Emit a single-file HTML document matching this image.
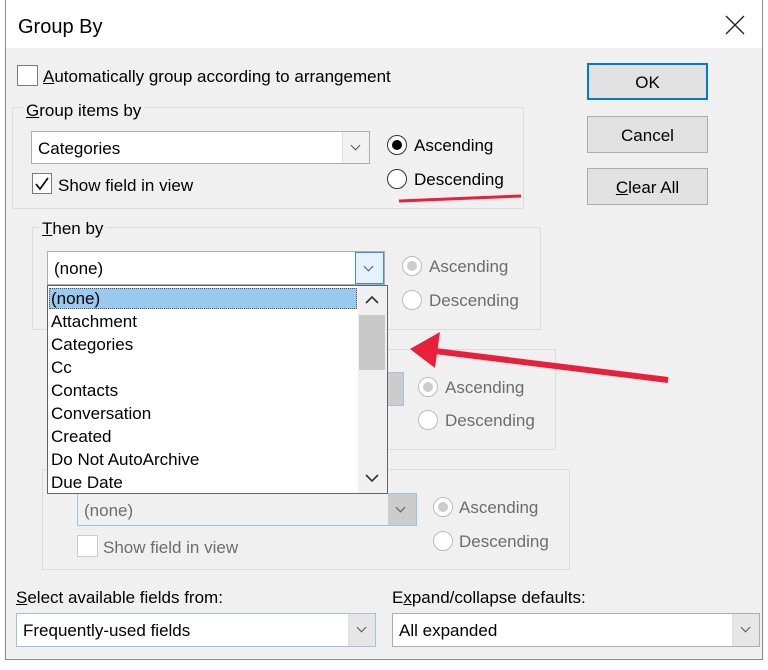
<!DOCTYPE html>
<html><head><meta charset="utf-8"><style>
*{box-sizing:border-box;margin:0;padding:0}
body{width:768px;height:670px;background:#fff;font-family:"Liberation Sans",sans-serif;font-size:17px;color:#000;position:relative;overflow:hidden}
.a{position:absolute}
.dlg{left:5px;top:0;width:758px;height:660px;background:#f0f0f0;border:1px solid #888}
.tb{left:6px;top:0;width:756px;height:48px;background:#fff}
.fr{position:absolute;border:1px solid #dcdcdc}
.lbl{position:absolute;background:#f0f0f0;padding:0 3px;line-height:20px}
.cb{position:absolute;background:#fff;border:1px solid #7a7a7a}
.combo{position:absolute;background:#fff;border:1px solid #adadad;line-height:33px;padding-left:6px}
.arr{position:absolute;right:0;top:0;bottom:0;width:27px;border-left:1px solid #ddd;background:#fff}
.arr:after{content:"";position:absolute;left:9px;top:10px;width:6px;height:6px;border-right:1.3px solid #555;border-bottom:1.3px solid #555;transform:rotate(45deg)}
.rad{position:absolute;width:20px;height:20px;border-radius:50%;background:#fff;border:1px solid #333}
.rad.d{border-color:#bbb}
.dot{position:absolute;left:4px;top:4px;width:10px;height:10px;border-radius:50%;background:#000}
.rad.d .dot{background:#ccc}
.t{position:absolute;line-height:24px;white-space:nowrap}
.g{color:#6d6d6d}
.btn{position:absolute;left:587px;width:121px;height:37px;background:#e1e1e1;border:1px solid #adadad;text-align:center;line-height:37px}
.li{position:absolute;left:51px;line-height:25px;white-space:nowrap}
</style></head><body>
<div class="a dlg"></div>
<div class="a tb"></div>
<div class="t" style="left:18px;top:15px;font-size:20px;line-height:24px">Group By</div>
<svg class="a" style="left:724px;top:14px" width="22" height="22"><path d="M2 2L20 20M20 2L2 20" stroke="#222" stroke-width="1.4"/></svg>

<div class="cb" style="left:17px;top:65px;width:21px;height:21px"></div>
<div class="t" style="left:43px;top:65px"><u>A</u>utomatically group according to arrangement</div>

<div class="fr" style="left:12px;top:107px;width:512px;height:102px"></div>
<div class="lbl" style="left:23px;top:101px"><u>G</u>roup items by</div>
<div class="combo" style="left:31px;top:131px;width:339px;height:33px">Categories<div class="arr" style="background:#f2f2f2"></div></div>
<div class="rad" style="left:387px;top:135px"><div class="dot"></div></div>
<div class="t" style="left:414px;top:134px">Ascending</div>
<div class="rad" style="left:387px;top:169px"></div>
<div class="t" style="left:414px;top:168px">Descending</div>
<div class="cb" style="left:32px;top:173px;width:20px;height:21px"></div>
<svg class="a" style="left:33px;top:174px" width="18" height="19"><path d="M3 10l4 5 8-11" stroke="#000" stroke-width="1.6" fill="none"/></svg>
<div class="t" style="left:58px;top:174px">Show field in view</div>
<svg class="a" style="left:395px;top:192px" width="130" height="14"><path d="M4 9L126 4" stroke="#e8203c" stroke-width="3"/></svg>

<div class="btn" style="top:63px;border:2px solid #0078d7;line-height:35px">OK</div>
<div class="btn" style="top:116px">Cancel</div>
<div class="btn" style="top:168px"><u>C</u>lear All</div>

<div class="fr" style="left:32px;top:227px;width:509px;height:103px"></div>
<div class="lbl" style="left:39px;top:219px"><u>T</u>hen by</div>
<div class="combo" style="left:47px;top:251px;width:338px;height:34px">(none)<div class="arr" style="width:29px;border:1px solid #3c8fd6;background:#e5f1fb"></div></div>
<div class="rad d" style="left:402px;top:256px"><div class="dot"></div></div>
<div class="t g" style="left:429px;top:255px">Ascending</div>
<div class="rad d" style="left:402px;top:290px"></div>
<div class="t g" style="left:429px;top:289px">Descending</div>

<div class="fr" style="left:260px;top:349px;width:296px;height:101px"></div>
<div class="a" style="left:370px;top:372px;width:34px;height:34px;background:#ccc;border:1px solid #9cc3e6"></div>
<div class="rad d" style="left:418px;top:377px"><div class="dot"></div></div>
<div class="t g" style="left:445px;top:376px">Ascending</div>
<div class="rad d" style="left:418px;top:410px"></div>
<div class="t g" style="left:445px;top:409px">Descending</div>

<div class="fr" style="left:42px;top:469px;width:528px;height:101px"></div>
<div class="combo g" style="left:77px;top:493px;width:340px;height:33px;background:#f0f0f0;border-color:#9cc3e6">(none)<div class="arr" style="background:#ccc;border:none;width:28px"></div></div>
<div class="rad d" style="left:433px;top:497px"><div class="dot"></div></div>
<div class="t g" style="left:459px;top:496px">Ascending</div>
<div class="rad d" style="left:433px;top:531px"></div>
<div class="t g" style="left:459px;top:530px">Descending</div>
<div class="cb" style="left:77px;top:535px;width:21px;height:22px;border-color:#ccc"></div>
<div class="t g" style="left:103px;top:536px">Show field in view</div>

<div class="a" style="left:47px;top:285px;width:341px;height:209px;background:#fff;border:1px solid #646464"></div>
<div class="a" style="left:49px;top:288px;width:308px;height:21px;background:#99c9ef;border:1px dotted #555"></div>
<div class="li" style="top:286px">(none)</div>
<div class="li" style="top:309px">Attachment</div>
<div class="li" style="top:332px">Categories</div>
<div class="li" style="top:355px">Cc</div>
<div class="li" style="top:378px">Contacts</div>
<div class="li" style="top:401px">Conversation</div>
<div class="li" style="top:424px">Created</div>
<div class="li" style="top:447px">Do Not AutoArchive</div>
<div class="li" style="top:470px">Due Date</div>
<div class="a" style="left:358px;top:286px;width:29px;height:207px;background:#f0f0f0"></div>
<div class="a" style="left:359px;top:315px;width:26px;height:55px;background:#c8c8c8"></div>
<svg class="a" style="left:364px;top:294px" width="16" height="12"><path d="M2 9L8 3L14 9" stroke="#333" stroke-width="1.6" fill="none"/></svg>
<svg class="a" style="left:364px;top:472px" width="16" height="12"><path d="M2 3L8 9L14 3" stroke="#333" stroke-width="1.6" fill="none"/></svg>

<svg class="a" style="left:400px;top:330px" width="280" height="65"><path d="M268 50L35 21" stroke="#e8203c" stroke-width="6"/><path d="M10 19L40 2L35 38Z" fill="#e8203c"/></svg>

<div class="t" style="left:16px;top:586px"><u>S</u>elect available fields from:</div>
<div class="combo" style="left:16px;top:613px;width:360px;height:34px;border-color:#9cc3e6">Frequently-used fields<div class="arr" style="background:#e6e6e6"></div></div>
<div class="t" style="left:392px;top:586px">E<u>x</u>pand/collapse defaults:</div>
<div class="combo" style="left:392px;top:613px;width:368px;height:34px">All expanded<div class="arr" style="background:#e6e6e6"></div></div>
</body></html>
